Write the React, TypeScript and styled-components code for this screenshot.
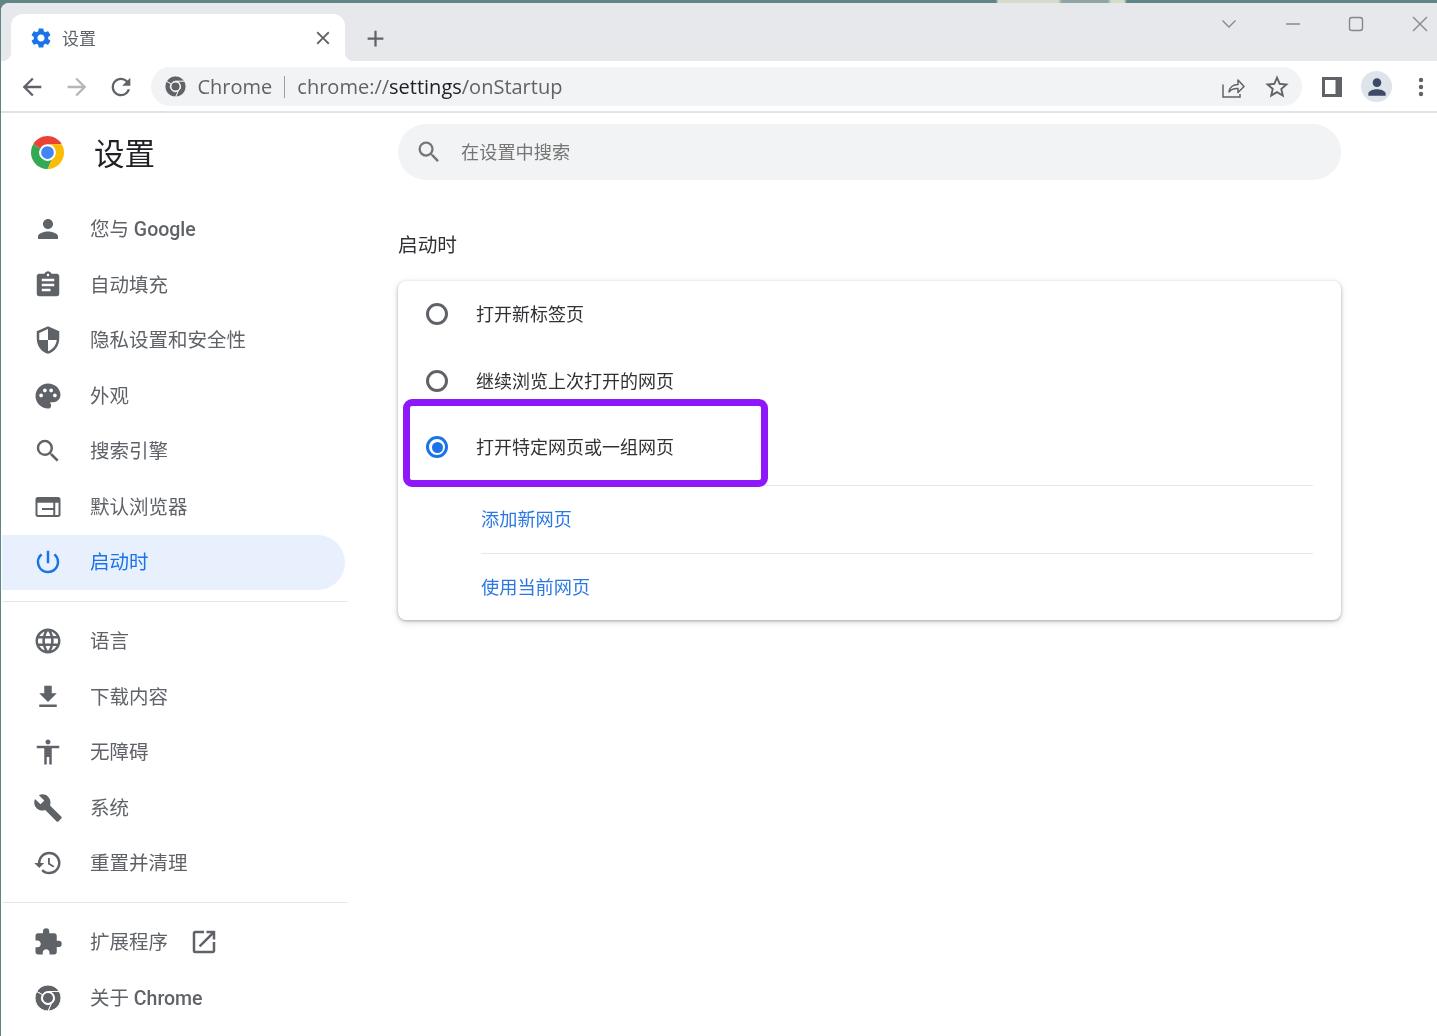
import React from 'react';
import styled, { createGlobalStyle } from 'styled-components';
import {
  MdAccessibility, MdAdd, MdArrowBack, MdArrowForward, MdAssignment, MdBuild, MdClose, MdExtension,
  MdFileDownload, MdLanguage, MdOpenInNew, MdPalette, MdPerson, MdPowerSettingsNew, MdRefresh, MdRestore,
  MdSearch, MdSecurity, MdSettings, MdStarBorder,
} from 'react-icons/md';

const FONT = `Roboto, "Noto Sans CJK SC", "Liberation Sans", sans-serif`;

const Global = createGlobalStyle`
  html, body { margin: 0; padding: 0; background: #fff; }
  body { font-family: ${FONT}; overflow: hidden; }
  * { box-sizing: border-box; }
`;

const Desktop = styled.div`
  width: 1437px;
  height: 1036px;
  padding: 3px 0 0 1px;
  overflow: hidden;
  filter: blur(0.5px);
  background: linear-gradient(90deg, #5f8585 0 996px, #d5dcc8 998px 1058px, #8fa5a3 1062px 1108px, #d5dcc8 1111px 1124px, #5f8585 1127px);
`;
const Win = styled.div`
  height: 100%;
  background: #fff;
  border-top-left-radius: 8px;
  overflow: hidden;
`;
const Strip = styled.div`
  height: 58px;
  display: flex;
  align-items: flex-start;
  padding: 11px 0 0 10px;
  background: #e6e8ec;
  color: #5f6368;
`;
const Tab = styled.div`
  position: relative;
  width: 334px;
  height: 47px;
  display: flex;
  align-items: center;
  padding: 0 11px 0 18px;
  background: #fff;
  border-radius: 12px 12px 0 0;
  font-size: 17px;
  color: #5f6368;
  &::before, &::after {
    content: '';
    position: absolute;
    bottom: 0;
    width: 9px;
    height: 9px;
  }
  &::before { left: -9px; background: radial-gradient(circle at 0 0, transparent 9px, #fff 9.5px); }
  &::after { right: -9px; background: radial-gradient(circle at 100% 0, transparent 9px, #fff 9.5px); }
`;
const TabTitle = styled.span`
  flex: 1;
  margin-left: 9px;
`;
const NewTab = styled.div`
  display: flex;
  margin: 11px 0 0 17px;
  color: #5f6368;
`;
const WinControls = styled.div`
  display: flex;
  gap: 45.6px;
  margin: 1px 8px 0 auto;
`;
const Toolbar = styled.div`
  height: 52px;
  display: flex;
  align-items: flex-start;
  padding: 6px 0 0 17px;
  background: #fff;
  border-bottom: 2px solid #e2e3e5;
`;
const NavBtn = styled.div<{ $dim?: boolean }>`
  display: flex;
  width: 28px;
  height: 39px;
  align-items: center;
  justify-content: center;
  margin-right: 16.5px;
  color: ${p => (p.$dim ? '#b4b6b9' : '#5f6368')};
`;
const Omni = styled.div`
  width: 1151px;
  height: 39px;
  margin-left: -1px;
  display: flex;
  align-items: center;
  padding: 0 11px 0 14px;
  background: #f1f3f4;
  border-radius: 20px;
  font-family: "Open Sans", "Noto Sans", sans-serif;
  font-size: 20px;
  color: #5f6368;
`;
const OmniLabel = styled.span`
  margin-left: 12px;
`;
const OmniSep = styled.span`
  width: 1px;
  height: 22px;
  margin: 0 12px;
  background: #9a9ea3;
`;
const Host = styled.span`
  color: #202124;
`;
const OmniRight = styled.div`
  display: flex;
  align-items: center;
  gap: 18px;
  margin-left: auto;
  color: #5f6368;
`;
const ToolRight = styled.div`
  display: flex;
  align-items: center;
  height: 39px;
  margin-left: 20px;
`;
const Avatar = styled.div`
  width: 31px;
  height: 31px;
  margin: 0 25.5px 0 19.5px;
  display: flex;
  align-items: center;
  justify-content: center;
  border-radius: 50%;
  background: #dfe3ea;
  color: #3c4a66;
`;
const Body = styled.div`
  display: flex;
  height: 923px;
`;
const Sidebar = styled.nav`
  width: 347px;
  padding-left: 1px;
  flex: none;
`;
const Brand = styled.div`
  height: 88.5px;
  display: flex;
  align-items: flex-start;
  padding: 22.5px 0 0 29px;
`;
const BrandTitle = styled.h1`
  margin: 0 0 0 30px;
  font-size: 30.5px;
  line-height: 38px;
  font-weight: 400;
  color: #202124;
`;
const Row = styled.div<{ $active?: boolean }>`
  width: 343px;
  height: 55.5px;
  display: flex;
  align-items: center;
  gap: 27px;
  padding-left: 31px;
  border-radius: 0 28px 28px 0;
  font-size: 19.5px;
  color: ${p => (p.$active ? '#1a73e8' : '#5f6368')};
  background: ${p => (p.$active ? '#e8f0fe' : 'transparent')};
`;
const RowIcon = styled.span`
  width: 30px;
  height: 30px;
  flex: none;
  display: flex;
  align-items: center;
  justify-content: center;
`;
const RowText = styled.span`
  padding-bottom: 3px;
`;
const Latin = styled.span`
  font-weight: 500;
`;
const External = styled.span`
  display: flex;
  margin-left: -6px;
`;
const SideRule = styled.hr`
  height: 1px;
  margin: 11px 0 11.5px;
  border: 0;
  background: #e6e7e9;
`;
const Main = styled.main`
  width: 943px;
  margin-left: 50px;
  padding-top: 11px;
`;
const SearchBox = styled.div`
  height: 56px;
  display: flex;
  align-items: center;
  gap: 18px;
  padding-left: 17px;
  border-radius: 28px;
  background: #f1f3f4;
  color: #757575;
  font-size: 18.2px;
`;
const SearchText = styled.span`
  padding-bottom: 2px;
`;
const Heading = styled.h2`
  margin: 52px 0 21px;
  font-size: 19.7px;
  line-height: 28px;
  font-weight: 400;
  color: #303134;
`;
const Card = styled.section`
  position: relative;
  height: 339px;
  border-radius: 8px;
  background: #fff;
  box-shadow: 0 1px 3px rgba(60, 64, 67, .35), 0 2px 7px rgba(60, 64, 67, .18);
`;
const RadioRow = styled.div`
  height: 66.5px;
  display: flex;
  align-items: center;
  gap: 28px;
  padding-left: 28px;
  font-size: 18px;
  color: #303134;
`;
const RadioText = styled.span`
  padding-bottom: 2px;
`;
const Radio = styled.span<{ $on?: boolean }>`
  width: 22px;
  height: 22px;
  flex: none;
  display: flex;
  align-items: center;
  justify-content: center;
  border-radius: 50%;
  border: 3px solid ${p => (p.$on ? '#1a73e8' : '#5f6368')};
  &::after {
    content: '';
    width: 11px;
    height: 11px;
    border-radius: 50%;
    background: ${p => (p.$on ? '#1a73e8' : 'transparent')};
  }
`;
const LinkRow = styled.div<{ $first?: boolean }>`
  height: 68px;
  margin: ${p => (p.$first ? '4.5px' : '0')} 28px 0 83px;
  padding-bottom: 4px;
  display: flex;
  align-items: center;
  border-top: 1px solid #e6e7e9;
  font-size: 18.2px;
  color: #2b78e4;
`;
const Highlight = styled.div`
  position: absolute;
  left: 5px;
  top: 118px;
  width: 365px;
  height: 88px;
  border: 7px solid #8f18fb;
  border-radius: 9px;
  pointer-events: none;
`;

const ChromeLogo = ({ size, mono }: { size: number; mono?: boolean }) => {
  const c = mono ? ['#5f6368', '#5f6368', '#5f6368', '#5f6368'] : ['#ea4335', '#fbbc05', '#34a853', '#4285f4'];
  const edge = mono ? { stroke: '#fff', strokeWidth: 1.6 } : {};
  return (
    <svg width={size} height={size} viewBox="2 2 44 44" aria-hidden>
      <circle cx="24" cy="24" r="21.5" fill="#fff" />
      <path fill={c[0]} {...edge} d="M4.95 13A22 22 0 0 1 43.05 13H24A11 11 0 0 0 14.47 18.5Z" />
      <path fill={c[1]} {...edge} d="M43.05 13A22 22 0 0 1 24 46L29.5 33.53A11 11 0 0 0 24 13Z" />
      <path fill={c[2]} {...edge} d="M24 46A22 22 0 0 1 4.95 13L14.47 18.5A11 11 0 0 0 29.5 33.53Z" />
      <circle cx="24" cy="24" r="8.5" fill={c[3]} />
    </svg>
  );
};
const Chevron = () => (
  <svg width="18" height="18" viewBox="0 0 18 18" fill="none" stroke="#85888d" strokeWidth="1.4"><path d="M2.500 5.500 9 12l6.500-6.500" /></svg>
);
const Minimize = () => (
  <svg width="18" height="18" viewBox="0 0 18 18" fill="none" stroke="#85888d" strokeWidth="1.4"><path d="M2 9h14" /></svg>
);
const Maximize = () => (
  <svg width="18" height="18" viewBox="0 0 18 18" fill="none" stroke="#85888d" strokeWidth="1.4"><rect x="2.500" y="2.500" width="13" height="13" rx="2.500" /></svg>
);
const CloseWin = () => (
  <svg width="18" height="18" viewBox="0 0 18 18" fill="none" stroke="#85888d" strokeWidth="1.4"><path d="M2 2l14 14M16 2 2 16" /></svg>
);
const Share = () => (
  <svg width="24" height="24" viewBox="0 0 24 24" fill="none" stroke="#5f6368" strokeWidth="1.5">
    <path d="M2 9.500V22h17v-3" />
    <path d="M8 17c.5-4.500 4-7.500 9-7.500V5l6 6.500-6 6v-4c-4-.3-7 1-9 3.500z" strokeLinejoin="round" />
  </svg>
);
const SidePanel = () => (
  <svg width="20" height="20" viewBox="0 0 20 20">
    <rect width="20" height="20" fill="#5f6368" />
    <rect x="3" y="3" width="10.500" height="14" fill="#fff" />
  </svg>
);
const Dots = () => (
  <svg width="6" height="20" viewBox="0 0 6 20" fill="#5f6368"><circle cx="3" cy="3" r="2.200" /><circle cx="3" cy="10" r="2.200" /><circle cx="3" cy="17" r="2.200" /></svg>
);
const BrowserIcon = ({ size }: { size: number }) => (
  <svg width={size} height={size} viewBox="0 0 24 24" fill="#5f6368">
    <path fillRule="evenodd" d="M3.800 4h16.400c1 0 1.800.8 1.800 1.800v12.400c0 1-.8 1.800-1.800 1.800H3.800C2.800 20 2 19.200 2 18.200V5.800C2 4.800 2.800 4 3.800 4zM3.600 8.500v9.900h12.600v-4h-9v-1.600h9V8.500zm14.200 0v9.900h2.600V8.500z" />
  </svg>
);

const group1 = [
  { icon: <MdPerson size={30} />, text: <>您与 <Latin>Google</Latin></> },
  { icon: <MdAssignment size={30} />, text: '自动填充' },
  { icon: <MdSecurity size={30} />, text: '隐私设置和安全性' },
  { icon: <MdPalette size={30} />, text: '外观' },
  { icon: <MdSearch size={30} />, text: '搜索引擎' },
  { icon: <BrowserIcon size={30} />, text: '默认浏览器' },
  { icon: <MdPowerSettingsNew size={30} />, text: '启动时', active: true },
];
const group2 = [
  { icon: <MdLanguage size={30} />, text: '语言' },
  { icon: <MdFileDownload size={30} />, text: '下载内容' },
  { icon: <MdAccessibility size={30} />, text: '无障碍' },
  { icon: <MdBuild size={30} />, text: '系统' },
  { icon: <MdRestore size={30} />, text: '重置并清理' },
];

export default function App() {
  return (
    <Desktop>
      <Global />
      <Win>
        <Strip>
          <Tab>
            <MdSettings size={24} color="#1a73e8" />
            <TabTitle>设置</TabTitle>
            <MdClose size={22} color="#5f6368" />
          </Tab>
          <NewTab><MdAdd size={27} /></NewTab>
          <WinControls>
            <Chevron /><Minimize /><Maximize /><CloseWin />
          </WinControls>
        </Strip>
        <Toolbar>
          <NavBtn><MdArrowBack size={28} /></NavBtn>
          <NavBtn $dim><MdArrowForward size={28} /></NavBtn>
          <NavBtn><MdRefresh size={28} /></NavBtn>
          <Omni>
            <ChromeLogo size={21} mono />
            <OmniLabel>Chrome</OmniLabel>
            <OmniSep />
            <span>chrome://<Host>settings</Host>/onStartup</span>
            <OmniRight>
              <Share />
              <MdStarBorder size={28} />
            </OmniRight>
          </Omni>
          <ToolRight>
            <SidePanel />
            <Avatar><MdPerson size={26} /></Avatar>
            <Dots />
          </ToolRight>
        </Toolbar>
        <Body>
          <Sidebar>
            <Brand>
              <ChromeLogo size={33} />
              <BrandTitle>设置</BrandTitle>
            </Brand>
            {group1.map((r, i) => (
              <Row key={i} $active={r.active}><RowIcon>{r.icon}</RowIcon><RowText>{r.text}</RowText></Row>
            ))}
            <SideRule />
            {group2.map((r, i) => (
              <Row key={i}><RowIcon>{r.icon}</RowIcon><RowText>{r.text}</RowText></Row>
            ))}
            <SideRule />
            <Row>
              <RowIcon><MdExtension size={30} /></RowIcon><RowText>扩展程序</RowText>
              <External><MdOpenInNew size={30} /></External>
            </Row>
            <Row><RowIcon><ChromeLogo size={26} mono /></RowIcon><RowText>关于 <Latin>Chrome</Latin></RowText></Row>
          </Sidebar>
          <Main>
            <SearchBox><MdSearch size={28} /><SearchText>在设置中搜索</SearchText></SearchBox>
            <Heading>启动时</Heading>
            <Card>
              <RadioRow><Radio /><RadioText>打开新标签页</RadioText></RadioRow>
              <RadioRow><Radio /><RadioText>继续浏览上次打开的网页</RadioText></RadioRow>
              <RadioRow><Radio $on /><RadioText>打开特定网页或一组网页</RadioText></RadioRow>
              <LinkRow $first>添加新网页</LinkRow>
              <LinkRow>使用当前网页</LinkRow>
              <Highlight />
            </Card>
          </Main>
        </Body>
      </Win>
    </Desktop>
  );
}
